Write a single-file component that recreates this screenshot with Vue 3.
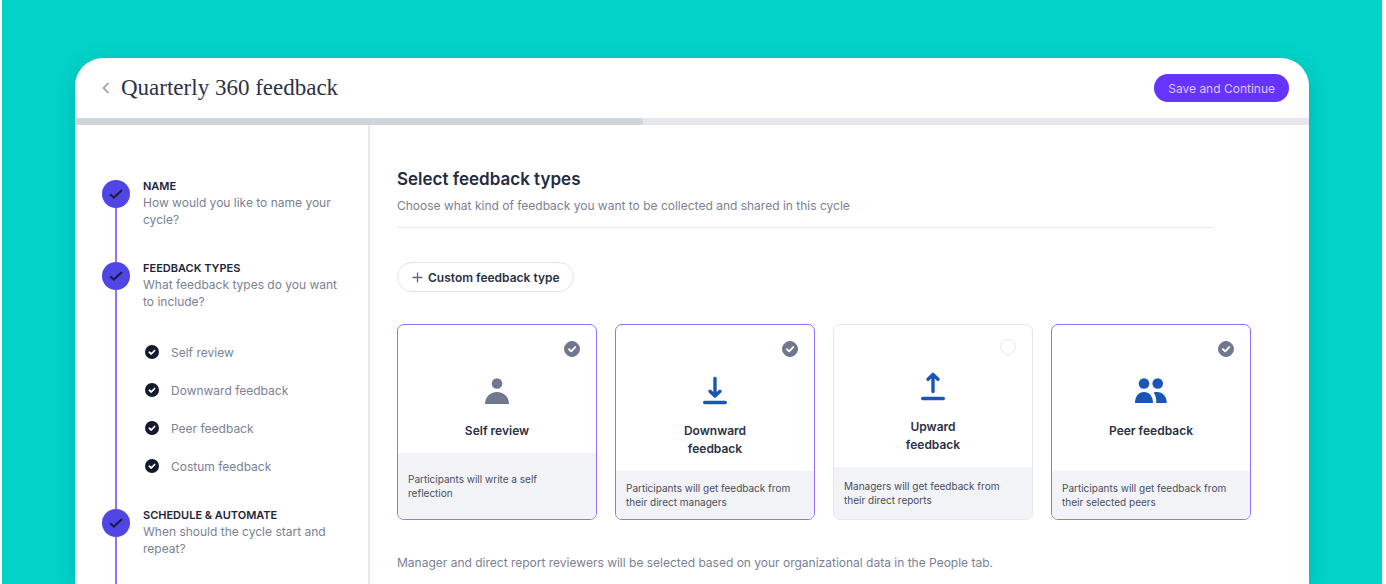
<template>
  <div class="page">
    <div class="backdrop">
      <main class="panel">
        <header class="topbar">
          <button class="back" type="button" aria-label="Back">
            <svg width="8" height="12" viewBox="0 0 8 12">
              <path d="M6.5 1.2 1.5 6l5 4.8" fill="none" stroke="#989eac" stroke-width="1.6" />
            </svg>
          </button>
          <h1>Quarterly 360 feedback</h1>
          <button class="save" type="button">Save and Continue</button>
        </header>

        <div class="progress">
          <div class="progress-fill" :style="{ width: progress + '%' }"></div>
        </div>

        <div class="columns">
          <nav class="sidebar">
            <ol class="steps">
              <li v-for="step in steps" :key="step.title" class="step">
                <div class="rail">
                  <svg width="28" height="28" viewBox="0 0 28 28">
                    <circle cx="14" cy="14" r="14" fill="#4f46e5" />
                    <path
                      d="M8.3 14.2 11.8 17.6 20 9.9"
                      fill="none"
                      stroke="#1b1c3c"
                      stroke-width="2"
                    />
                  </svg>
                  <span class="line"></span>
                </div>
                <div class="step-text">
                  <h2>{{ step.title }}</h2>
                  <p>{{ step.question }}</p>
                  <ul v-if="step.items" class="substeps">
                    <li v-for="item in step.items" :key="item">
                      <svg width="14" height="14" viewBox="0 0 16 16">
                        <circle cx="8" cy="8" r="8" fill="#141a2e" />
                        <path
                          d="M5 8.3 7.2 10.3 11 6.3"
                          fill="none"
                          stroke="#fff"
                          stroke-width="2"
                          stroke-linecap="round"
                          stroke-linejoin="round"
                        />
                      </svg>
                      <span>{{ item }}</span>
                    </li>
                  </ul>
                </div>
              </li>
            </ol>
          </nav>

          <section class="content">
            <div class="intro">
              <h2>Select feedback types</h2>
              <p>Choose what kind of feedback you want to be collected and shared in this cycle</p>
            </div>

            <button class="custom" type="button">
              <svg width="11" height="11" viewBox="0 0 11 11">
                <path d="M5.5 0.5v10M0.5 5.5h10" stroke="#5f6678" stroke-width="1.3" />
              </svg>
              Custom feedback type
            </button>

            <div class="cards">
              <label
                v-for="type in types"
                :key="type.id"
                class="card"
                :class="{ selected: type.selected }"
              >
                <span class="card-body">
                  <span class="check">
                    <input v-model="type.selected" type="checkbox" :aria-label="type.title">
                    <svg v-if="type.selected" width="16" height="16" viewBox="0 0 16 16">
                      <path
                        d="M5 8.2 7.2 10.3 11.2 6.1"
                        fill="none"
                        stroke="#fff"
                        stroke-width="1.9"
                        stroke-linecap="round"
                        stroke-linejoin="round"
                      />
                    </svg>
                  </span>
                  <svg class="icon" width="34" height="30" viewBox="0 0 34 30">
                    <g v-if="type.id === 'self'" fill="#71778f">
                      <circle cx="17" cy="7.5" r="5.3" />
                      <path d="M5 28C5 21 10 16 17 16s12 5 12 12z" />
                    </g>
                    <g
                      v-else-if="type.id === 'down'"
                      fill="none"
                      stroke="#1a56b5"
                      stroke-width="3.4"
                      stroke-linecap="round"
                      stroke-linejoin="round"
                    >
                      <path d="M17 2.5v17M12 15.2l5 4.8 5-4.8M6.7 26.5h20.6" />
                    </g>
                    <g
                      v-else-if="type.id === 'up'"
                      fill="none"
                      stroke="#1a56b5"
                      stroke-width="3.4"
                      stroke-linecap="round"
                      stroke-linejoin="round"
                    >
                      <path d="M17 19.5v-17M12 7.2l5-4.8 5 4.8M6.7 26.5h20.6" />
                    </g>
                    <g v-else fill="#1a56b5">
                      <circle cx="10" cy="7.5" r="5.3" />
                      <circle cx="23.7" cy="7.5" r="5.3" />
                      <path d="M1 27C1 20.5 4.5 16 10 16s9 4.5 9 11z" />
                      <path d="M19.6 16.6C26.5 14.6 32.8 18.8 32.8 27H22.3C22.3 22.5 21.6 19.2 19.6 16.6z" />
                    </g>
                  </svg>
                  <span class="card-title">{{ type.title }}</span>
                </span>
                <span class="card-note">{{ type.note }}</span>
              </label>
            </div>

            <p class="hint">
              Manager and direct report reviewers will be selected based on your organizational data in the People tab.
            </p>
          </section>
        </div>
      </main>
    </div>
  </div>
</template>

<script setup>
import { ref } from 'vue'

const progress = ref(46)

const steps = [
  { title: 'NAME', question: 'How would you like to name your cycle?' },
  {
    title: 'FEEDBACK TYPES',
    question: 'What feedback types do you want to include?',
    items: ['Self review', 'Downward feedback', 'Peer feedback', 'Costum feedback']
  },
  { title: 'SCHEDULE & AUTOMATE', question: 'When should the cycle start and repeat?' }
]

const types = ref([
  { id: 'self', title: 'Self review', note: 'Participants will write a self reflection', selected: true },
  { id: 'down', title: 'Downward feedback', note: 'Participants will get feedback from their direct managers', selected: true },
  { id: 'up', title: 'Upward feedback', note: 'Managers will get feedback from their direct reports', selected: false },
  { id: 'peer', title: 'Peer feedback', note: 'Participants will get feedback from their selected peers', selected: true }
])
</script>

<style>
body {
  margin: 0;
  background: #fff;
}
</style>

<style scoped>
* {
  box-sizing: border-box;
}
h1, h2, p, ol, ul {
  margin: 0;
  padding: 0;
  list-style: none;
}
button {
  font-family: inherit;
  cursor: pointer;
}
svg {
  display: block;
  flex-shrink: 0;
}
.page {
  padding: 0 4px 0 2px;
  font-family: Inter, "Liberation Sans", sans-serif;
  font-size: 12px;
  color: #7b8193;
}
.backdrop {
  display: flex;
  min-height: 100vh;
  padding: 58px 73px 0;
  background: #02d3c9;
  overflow: hidden;
}
.panel {
  display: flex;
  flex: 1;
  flex-direction: column;
  min-width: 0;
  background: #fff;
  border-radius: 28px 28px 0 0;
  box-shadow: 0 4px 20px rgba(0, 70, 80, 0.2);
}
.topbar {
  display: flex;
  align-items: center;
  height: 60px;
  padding: 0 20px 0 23px;
}
.back {
  padding: 4px;
  border: 0;
  background: none;
}
h1 {
  flex: 1;
  margin-left: 7px;
  font-family: "Liberation Serif", serif;
  font-size: 23px;
  font-weight: 400;
  line-height: 28px;
  color: #2c3346;
}
.save {
  height: 28px;
  padding: 0 14px;
  border: 0;
  border-radius: 14px;
  background: #6633ff;
  color: #d9ccff;
  font-size: 12px;
}
.progress {
  height: 7px;
  background: #e5e7ea;
}
.progress-fill {
  height: 7px;
  border-radius: 0 4px 4px 0;
  background: #d0d5da;
}
.columns {
  display: flex;
  flex: 1;
}
.sidebar {
  flex: 0 0 295px;
  padding: 55px 24px 0 27px;
  border-right: 2px solid #e6e9ee;
}
.steps {
  display: flex;
  flex-direction: column;
  height: 100%;
}
.step {
  display: flex;
  gap: 13px;
}
.step:last-child {
  flex: 1;
}
.rail {
  display: flex;
  flex-direction: column;
  align-items: center;
}
.line {
  flex: 1;
  width: 2px;
  background: #966fff;
}
.step-text {
  padding-bottom: 34px;
}
.step:last-child .step-text {
  padding-bottom: 0;
}
.step-text:has(.substeps) {
  padding-bottom: 24px;
}
.step h2 {
  padding-bottom: 2px;
  font-size: 11px;
  font-weight: 600;
  line-height: 12px;
  color: #20263a;
}
.step p {
  line-height: 17px;
}
.substeps {
  padding-top: 23px;
}
.substeps li {
  display: flex;
  align-items: center;
  gap: 12px;
  height: 38px;
  padding-left: 2px;
}
.content {
  flex: 1;
  min-width: 0;
  padding: 41px 58px 0 27px;
}
.intro {
  margin-right: 38px;
  padding-bottom: 11px;
  border-bottom: 1px solid #e8eaee;
}
.intro h2 {
  font-size: 17px;
  font-weight: 600;
  line-height: 26px;
  color: #262c3f;
}
.intro p {
  padding-top: 4px;
  line-height: 20px;
}
.custom {
  display: flex;
  align-items: center;
  gap: 5px;
  height: 30px;
  margin: 34px 0 32px;
  padding: 0 13px 0 14px;
  border: 1px solid #dfe3ea;
  border-radius: 15px;
  background: #fff;
  color: #2b3144;
  font-size: 12px;
  font-weight: 600;
}
.cards {
  display: grid;
  grid-template-columns: repeat(4, 1fr);
  gap: 18px;
}
.card {
  display: flex;
  flex-direction: column;
  min-height: 196px;
  overflow: hidden;
  border: 1px solid #e3e7ee;
  border-radius: 7px;
  cursor: pointer;
}
.card.selected {
  border-color: #966fff;
}
.card-body {
  display: flex;
  flex-direction: column;
  align-items: center;
  padding: 14px 16px 13px;
}
.selected .card-body {
  padding-top: 16px;
}
.check {
  display: grid;
  align-self: flex-end;
}
.check > * {
  grid-area: 1 / 1;
}
.check svg {
  z-index: 1;
  pointer-events: none;
}
.check input {
  width: 16px;
  height: 16px;
  margin: 0;
  appearance: none;
  border: 1px solid #e3e7ee;
  border-radius: 50%;
  background: #fff;
}
.check input:checked {
  border-color: #71778f;
  background: #71778f;
}
.icon {
  margin: 17px 0 16px;
}
.selected .icon {
  margin-top: 19px;
}
.card-title {
  width: 100px;
  font-weight: 600;
  line-height: 18px;
  text-align: center;
  color: #2b3144;
}
.card:last-child .card-title {
  min-height: 36px;
}
.card-note {
  display: flex;
  flex: 1;
  align-items: center;
  padding: 0 20px 0 10px;
  background: #f2f3f6;
  color: #474d5f;
  font-size: 10px;
  line-height: 14px;
}
.hint {
  padding-top: 33px;
  line-height: 20px;
}
</style>
